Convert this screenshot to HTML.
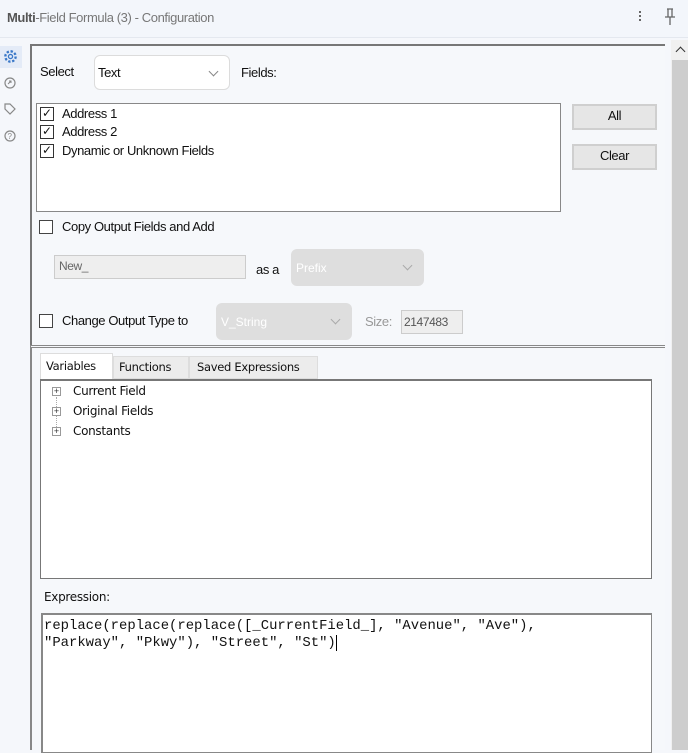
<!DOCTYPE html>
<html><head><style>
*{box-sizing:border-box;margin:0;padding:0}
body{width:688px;height:750px;overflow:hidden;background:#f5f7fb;font-family:"Liberation Sans",Arial,sans-serif;font-size:12px;color:#111;position:relative}
.a{position:absolute;white-space:nowrap}
.n{letter-spacing:-0.4px}
.hdr{left:0;top:0;width:688px;height:38px;background:#f3f6fb;border-bottom:1px solid #e4e8ef}
.cb{width:14px;height:14px;border:1px solid #333;background:#fff}
.btn{background:#e6e6e6;border:2px solid #cfcfcf;text-align:center;line-height:20px;font-size:13px}
.dd{border:1px solid #dcdcdc;border-radius:6px;background:#fff}
.dis{background:#dedede;border-radius:6px;color:#fff}
.chev{position:absolute;width:7px;height:7px;border-right:1.5px solid #888;border-bottom:1.5px solid #888;transform:rotate(45deg)}
.tree{font-family:"DejaVu Sans",sans-serif;font-size:12px;letter-spacing:-0.3px}
.pl{width:9px;height:9px;border:1px solid #999;background:#fff;font-size:9px;line-height:7px;text-align:center;color:#333}
.tab{font-family:"DejaVu Sans",sans-serif;font-size:11.5px;letter-spacing:-0.3px}
</style></head><body>
<div class="a hdr"></div>
<div class="a n" style="left:7px;top:10px;font-size:13px;color:#777"><b style="color:#555">Multi</b>-Field Formula (3) - Configuration</div>
<div class="a" style="left:639px;top:11px;width:2px;height:2px;background:#666;box-shadow:0 4px #666,0 8px #666"></div>
<svg class="a" style="left:664px;top:8px" width="12" height="18" viewBox="0 0 12 18"><path d="M3 1h6M4 1v8M8 1v8M1 9h10M6 9v8" stroke="#666" stroke-width="1.3" fill="none"/></svg>

<!-- sidebar icons -->
<div class="a" style="left:0;top:46px;width:22px;height:22px;background:#e4ebf7"></div>
<svg class="a" style="left:3px;top:49px" width="15" height="15" viewBox="0 0 16 16"><circle cx="8" cy="8" r="5.5" fill="none" stroke="#3a78c8" stroke-width="2.5" stroke-dasharray="2.5 1.8"/><circle cx="8" cy="8" r="2.2" fill="none" stroke="#3a78c8" stroke-width="1.4"/></svg>
<svg class="a" style="left:4px;top:77px" width="12" height="12"><circle cx="6" cy="6" r="5" fill="none" stroke="#888" stroke-width="1.2"/><path d="M4 7 L7 4 M5 4h2v2" stroke="#888" fill="none"/></svg>
<svg class="a" style="left:4px;top:103px" width="12" height="12"><path d="M1 1h5l5 5-5 5-5-5z" fill="none" stroke="#888" stroke-width="1.2"/></svg>
<svg class="a" style="left:4px;top:130px" width="12" height="12"><circle cx="6" cy="6" r="5" fill="none" stroke="#888" stroke-width="1.2"/><text x="3.5" y="9" font-size="8" fill="#888">?</text></svg>

<!-- top panel -->
<div class="a" style="left:30px;top:44px;width:635px;height:302px;border-left:2px solid #777;border-top:2px solid #777;background:#f6f8fb"></div>
<div class="a n" style="left:40px;top:64px;font-size:13px">Select</div>
<div class="a dd" style="left:94px;top:55px;width:136px;height:35px"><span class="a n" style="left:3px;top:9px;font-size:13px">Text</span><span class="chev" style="left:115px;top:12px"></span></div>
<div class="a n" style="left:241px;top:65px;font-size:13px">Fields:</div>
<div class="a" style="left:36px;top:103px;width:525px;height:109px;border:1px solid #888;background:#fff"></div>
<div class="a cb" style="left:40px;top:107px;font-size:12px;line-height:11px;text-align:center">✓</div><div class="a n" style="left:62px;top:106px;font-size:13px">Address 1</div>
<div class="a cb" style="left:40px;top:125px;font-size:12px;line-height:11px;text-align:center">✓</div><div class="a n" style="left:62px;top:124px;font-size:13px">Address 2</div>
<div class="a cb" style="left:40px;top:144px;font-size:12px;line-height:11px;text-align:center">✓</div><div class="a n" style="left:62px;top:143px;font-size:13px">Dynamic or Unknown Fields</div>
<div class="a btn n" style="left:572px;top:104px;width:85px;height:26px">All</div>
<div class="a btn n" style="left:572px;top:144px;width:85px;height:26px">Clear</div>
<div class="a cb" style="left:39px;top:220px;border-color:#444"></div><div class="a n" style="left:62px;top:219px;font-size:13px">Copy Output Fields and Add</div>
<div class="a n" style="left:54px;top:255px;width:192px;height:24px;border:1px solid #ccc;background:#eee;color:#666;padding:3px 4px;font-size:12px">New_</div>
<div class="a n" style="left:256px;top:262px;font-size:13px">as a</div>
<div class="a dis" style="left:291px;top:249px;width:133px;height:37px"><span class="a" style="left:5px;top:12px;font-size:12px">Prefix</span><span class="chev" style="left:113px;top:13px;border-color:#aaa"></span></div>
<div class="a cb" style="left:39px;top:314px;border-color:#444"></div><div class="a n" style="left:62px;top:313px;font-size:13px">Change Output Type to</div>
<div class="a dis" style="left:216px;top:303px;width:136px;height:37px"><span class="a" style="left:5px;top:12px;font-size:12px">V_String</span><span class="chev" style="left:116px;top:13px;border-color:#aaa"></span></div>
<div class="a n" style="left:365px;top:314px;font-size:13px;color:#999">Size:</div>
<div class="a n" style="left:401px;top:310px;width:62px;height:24px;border:1px solid #ccc;background:#eee;color:#555;padding:4px 2px;font-size:12px">2147483</div>

<!-- bottom panel -->
<div class="a" style="left:30px;top:345px;width:635px;height:405px;border-top:3px double #888;border-left:2px solid #888;background:#f6f8fb"></div>
<div class="a tab" style="left:40px;top:353px;width:73px;height:27px;background:#fff;border:1px solid #ddd;border-bottom:none;padding:5px 5px">Variables</div>
<div class="a tab" style="left:113px;top:356px;width:76px;height:23px;background:#ececec;border:1px solid #ddd;padding:3px 5px">Functions</div>
<div class="a tab" style="left:189px;top:356px;width:129px;height:23px;background:#ececec;border:1px solid #ddd;padding:3px 7px">Saved Expressions</div>
<div class="a" style="left:40px;top:379px;width:612px;height:200px;border:1px solid #777;background:#fff;border-top-width:2px"></div>
<div class="a" style="left:56px;top:397px;height:36px;border-left:1px dotted #aaa"></div>
<div class="a pl" style="left:52px;top:387px">+</div><div class="a tree" style="left:73px;top:384px">Current Field</div>
<div class="a pl" style="left:52px;top:407px">+</div><div class="a tree" style="left:73px;top:404px">Original Fields</div>
<div class="a pl" style="left:52px;top:427px">+</div><div class="a tree" style="left:73px;top:424px">Constants</div>
<div class="a tree" style="left:44px;top:590px">Expression:</div>
<div class="a" style="left:41px;top:613px;width:611px;height:140px;border:1px solid #888;border-top-width:2px;border-left-width:2px;background:#fff;font-family:'Liberation Mono',monospace;font-size:13.9px;line-height:17px;padding:3px 1px;white-space:pre">replace(replace(replace([_CurrentField_], "Avenue", "Ave"),
"Parkway", "Pkwy"), "Street", "St")<span style="border-left:1px solid #000"></span></div>

<!-- scrollbar -->
<div class="a" style="left:671px;top:40px;width:17px;height:710px;background:#f0f0f0"></div>
<div class="a" style="left:672px;top:60px;width:16px;height:690px;background:#cdcdcd"></div>
<div class="a chev" style="left:677px;top:48px;transform:rotate(225deg);border-color:#333"></div>
</body></html>
